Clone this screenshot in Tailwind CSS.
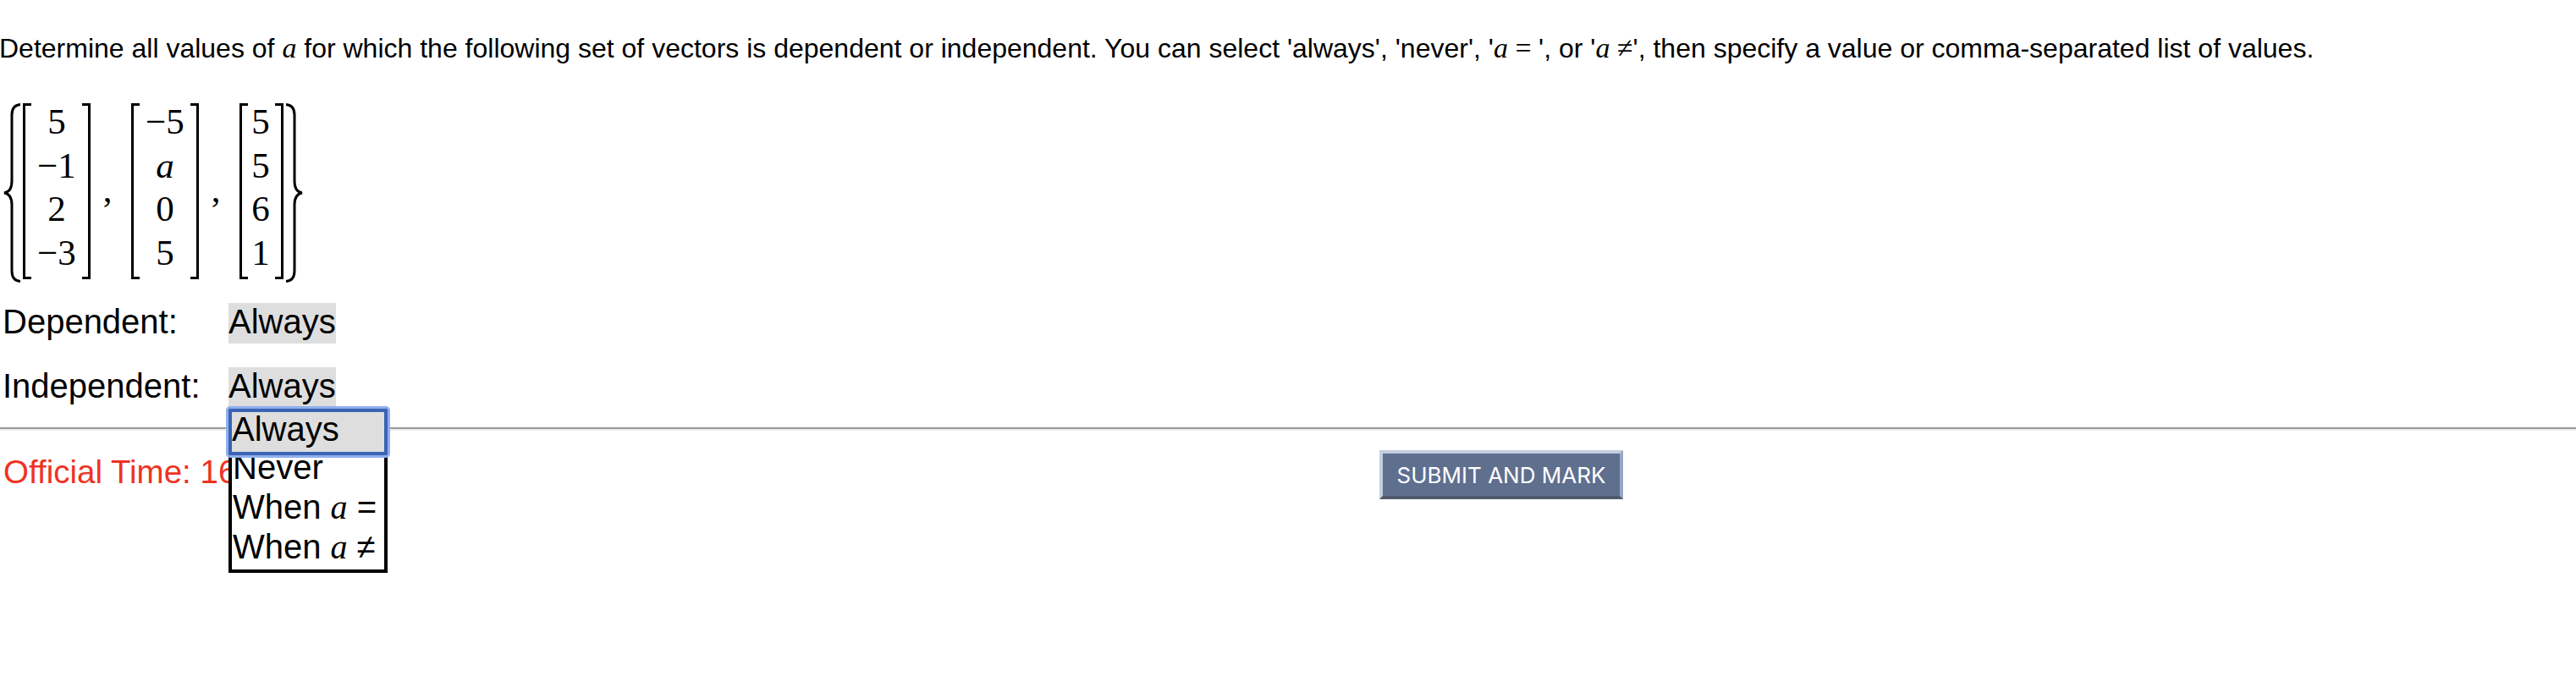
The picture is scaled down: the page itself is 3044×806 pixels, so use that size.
<!doctype html>
<html>
<head>
<meta charset="utf-8">
<script src="https://cdn.jsdelivr.net/npm/@tailwindcss/browser@4"></script>
</head>
<body class="bg-white text-black font-['Liberation_Sans',sans-serif]">
<div class="relative w-[3044px] h-[806px] overflow-hidden">
  <p class="pt-[36px] h-[122px] text-[32px] leading-[42px] whitespace-nowrap -ml-[1px]">Determine all values of <i class="font-['Liberation_Serif',serif] text-[34px] leading-none">a</i> for which the following set of vectors is dependent or independent. You can select 'always', 'never', '<i class="font-['Liberation_Serif',serif] text-[34px] leading-none">a</i><span class="font-['Liberation_Serif',serif] text-[34px] leading-none"> = </span>', or '<i class="font-['Liberation_Serif',serif] text-[34px] leading-none">a</i><span class="font-['Liberation_Serif',serif] text-[34px] leading-none"> ≠</span>', then specify a value or comma-separated list of values.</p>

  <div class="flex h-[212px] pl-[4px] font-['Liberation_Serif',serif] text-[43px] leading-[51.5px]">
    <svg class="w-[21px] h-[212px] shrink-0" viewBox="0 0 21 212" fill="none" stroke="black" stroke-width="3"><path d="M20 1.5C13 2 10 6 10 14V92C10 100 7 105 1 106C7 107 10 112 10 120V198C10 206 13 210 20 210.5"/></svg>
    <div class="flex ml-[2px] w-[80px] h-[208px]">
      <div class="w-[10px] border-l-[3px] border-y-[3px] border-black"></div>
      <div class="flex-1 flex flex-col items-center -mt-[4px]"><span>5</span><span>−1</span><span>2</span><span>−3</span></div>
      <div class="w-[10px] border-r-[3px] border-y-[3px] border-black"></div>
    </div>
    <div class="w-[48px] h-[208px] flex items-start justify-center"><span class="pt-[76px] pr-[8px]">,</span></div>
    <div class="flex w-[80px] h-[208px]">
      <div class="w-[10px] border-l-[3px] border-y-[3px] border-black"></div>
      <div class="flex-1 flex flex-col items-center -mt-[4px]"><span>−5</span><i>a</i><span>0</span><span>5</span></div>
      <div class="w-[10px] border-r-[3px] border-y-[3px] border-black"></div>
    </div>
    <div class="w-[48px] h-[208px] flex items-start justify-center"><span class="pt-[76px] pr-[8px]">,</span></div>
    <div class="flex w-[52px] h-[208px]">
      <div class="w-[10px] border-l-[3px] border-y-[3px] border-black"></div>
      <div class="flex-1 flex flex-col items-center -mt-[4px] pr-[2px]"><span>5</span><span>5</span><span>6</span><span>1</span></div>
      <div class="w-[10px] border-r-[3px] border-y-[3px] border-black"></div>
    </div>
    <svg class="ml-[2px] w-[21px] h-[212px] shrink-0" viewBox="0 0 21 212" fill="none" stroke="black" stroke-width="3"><path d="M1 1.5C8 2 11 6 11 14V92C11 100 14 105 20 106C14 107 11 112 11 120V198C11 206 8 210 1 210.5"/></svg>
  </div>

  <div class="flex items-center h-[48px] mt-[24px] pl-[3px] text-[40px]">
    <span class="w-[267px] -mt-[4px]">Dependent:</span><span class="bg-[#dedede] h-[48px] leading-[44px]">Always</span>
  </div>
  <div class="flex items-center h-[48px] mt-[28px] pl-[3px] text-[40px]">
    <span class="w-[267px] -mt-[4px]">Independent:</span><span class="bg-[#dedede] h-[48px] leading-[44px]">Always</span>
  </div>
  <div class="mt-[23px] h-[4px] border-t-2 border-b-2 border-t-[#999999] border-b-[#eeeeee]"></div>
  <div class="flex mt-[27px] relative">
    <span class="pl-[4px] text-[38.5px] leading-[44px] text-[#ee3322] whitespace-nowrap">Official Time: 16:42</span>
  </div>

  <button class="absolute left-[1630px] top-[532px] w-[288px] h-[58px] bg-[#5f6f8e] border-[4px] border-t-[#c3d0e0] border-l-[#c3d0e0] border-r-[#95a7c2] border-b-[#505a6a] text-white text-[26px] font-['Inter',sans-serif]">SUBMIT AND MARK</button>

  <div class="absolute left-[270px] top-[483px] w-[188px] h-[194px] bg-white border-[4px] border-black text-[40px]">
    <div class="absolute -left-[4px] -top-[4px] w-[188px] h-[55px] bg-[#dedede] border-[4px] border-[#3a64b4] outline-[3px] outline-[#8fb0ee] rounded-[2px] leading-[40px]">Always</div>
    <div class="pt-[42px] pl-[1px] leading-[47px]">
      <div>Never</div>
      <div>When <i class="font-['Liberation_Serif',serif]">a</i> =</div>
      <div>When <i class="font-['Liberation_Serif',serif]">a</i> ≠</div>
    </div>
  </div>
</div>
</body>
</html>
